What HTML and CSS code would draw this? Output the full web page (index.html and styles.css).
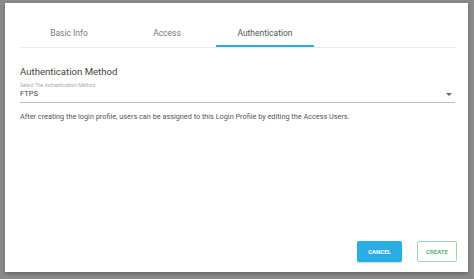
FILE: index.html
```html
<!DOCTYPE html>
<html lang="en">
<head>
    <meta charset="UTF-8">
    <meta name="viewport" content="width=device-width, initial-scale=1.0">
    <title>Create Login Profile</title>
    <link rel="stylesheet" href="styles.css">
</head>
<body>
    <div class="dialog">
        <div class="tabs">
            <div class="tab">Basic Info</div>
            <div class="tab">Access</div>
            <div class="tab active">Authentication</div>
        </div>

        <h2 class="section-title">Authentication Method</h2>
        <label class="field-label" for="auth-method">Select The Authentication Method</label>
        <div class="select-row" id="auth-method">
            <span>FTPS</span>
            <span class="caret"></span>
        </div>

        <p class="note">After creating the login profile, users can be assigned to this Login Profile by editing the Access Users.</p>

        <div class="footer">
            <button class="btn btn-cancel">CANCEL</button>
            <button class="btn btn-create">CREATE</button>
        </div>
    </div>
</body>
</html>
```

FILE: styles.css
```css
:root {
    --primary: #29aee3;
    --green: #5cb87a;
    --text: #333333;
    --text-light: #7a7a7a;
    --line: #ececec;
}

html, body {
    height: 100%;
}

body {
    margin: 0;
    background: #8a8a8a;
    font-family: Roboto, "Liberation Sans", sans-serif;
    color: var(--text);
    overflow: hidden;
}

.dialog {
    margin: 3px 6px 0 5px;
    height: 269px;
    padding: 0 13px 0 15px;
    background: #ffffff;
    box-shadow: 0 2px 4px rgb(0 0 0 / 0.25);
    display: flex;
    flex-direction: column;
}

.tabs {
    display: flex;
    margin-top: 17px;
    border-bottom: 1px solid var(--line);
}

.tab {
    width: 98px;
    height: 27px;
    line-height: 27px;
    text-align: center;
    font-size: 8.5px;
    color: var(--text-light);
}

.tab.active {
    color: #555555;
    box-shadow: inset 0 -2px 0 var(--primary);
}

.section-title {
    margin: 17px 0 0;
    font-size: 9.6px;
    line-height: 14px;
    font-weight: 400;
    color: #444444;
}

.field-label {
    display: block;
    margin-top: 3px;
    font-size: 5px;
    line-height: 7px;
    color: #aaaaaa;
}

.select-row {
    display: flex;
    justify-content: space-between;
    align-items: center;
    height: 10px;
    padding-bottom: 3px;
    border-bottom: 1px solid #bdbdbd;
    font-size: 7.5px;
    line-height: 10px;
    color: #444444;
}

.caret {
    width: 0;
    height: 0;
    margin-right: 3px;
    border-left: 3px solid transparent;
    border-right: 3px solid transparent;
    border-top: 3px solid #666666;
}

.note {
    margin: 9px 0 0;
    font-size: 7.3px;
    line-height: 10px;
    color: #555555;
}

.footer {
    margin-top: auto;
    margin-right: -2px;
    padding-bottom: 10px;
    display: flex;
    justify-content: flex-end;
    gap: 15px;
}

.btn {
    height: 21px;
    padding: 0;
    border-radius: 2px;
    font-family: Roboto, "Liberation Sans", sans-serif;
    font-size: 6px;
    font-weight: 700;
    cursor: pointer;
}

.btn-cancel {
    width: 45px;
    border: none;
    background: var(--primary);
    color: #ffffff;
    box-shadow: 0 1px 2px rgb(0 0 0 / 0.2);
}

.btn-create {
    width: 40px;
    border: 1px solid #9fd6ae;
    background: #ffffff;
    color: var(--green);
}
```
